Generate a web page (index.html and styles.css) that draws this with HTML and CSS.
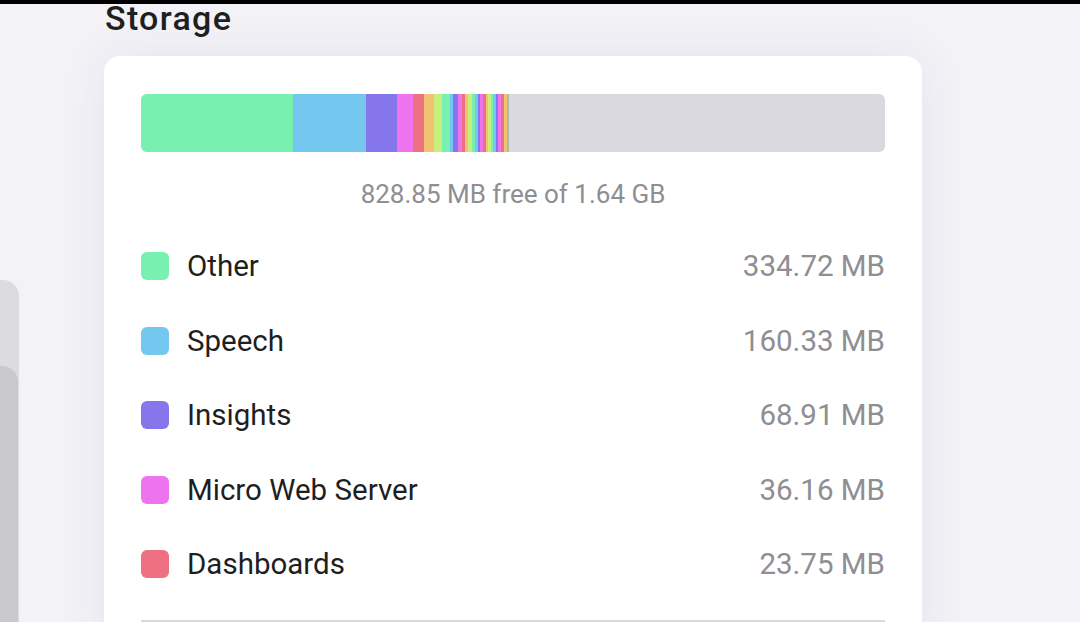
FILE: index.html
```html
<!DOCTYPE html>
<html lang="en">
<head>
  <meta charset="UTF-8" />
  <title>Storage</title>
  <link rel="stylesheet" href="styles.css">
</head>
<body>

<div class="statusbar"></div>
<div class="sheet sheet-back"></div>
<div class="sheet sheet-front"></div>

<main class="page">
  <h1>Storage</h1>

  <section class="card">
    <div id="usageBar" class="bar"></div>
    <p class="free">828.85 MB free of 1.64 GB</p>
    <ul id="usageList" class="list"></ul>
    <div class="divider"></div>
  </section>
</main>

<script>
  const totalMb = 1640;
  const palette = ['#77f0b0', '#74c7ee', '#8676ec', '#ee73ee', '#ee7181', '#efc372', '#c8ef7a'];

  const apps = [
    { name: 'Other', size: 334.72 },
    { name: 'Speech', size: 160.33 },
    { name: 'Insights', size: 68.91 },
    { name: 'Micro Web Server', size: 36.16 },
    { name: 'Dashboards', size: 23.75 }
  ];

  // the long tail of small apps, only shown in the bar
  const smallApps = [22, 17.6, 17.6, 6.6, 11, 8.8, 6.6, 6.6, 8.8, 6.6, 6.6, 4.4,
    6.6, 6.6, 4.4, 6.6, 4.4, 6.6, 4.4, 6.6, 6.6, 6.6];

  const bar = document.getElementById('usageBar');
  const list = document.getElementById('usageList');

  function addSegment(size, color) {
    const seg = document.createElement('div');
    seg.className = 'segment';
    seg.style.width = (size / totalMb * 100) + '%';
    seg.style.background = color;
    bar.appendChild(seg);
  }

  apps.forEach((app, i) => {
    addSegment(app.size, palette[i % palette.length]);

    const row = document.createElement('li');
    row.className = 'row';
    row.innerHTML =
      '<span class="swatch" style="background:' + palette[i % palette.length] + '"></span>' +
      '<span class="name">' + app.name + '</span>' +
      '<span class="size">' + app.size.toFixed(2) + ' MB</span>';
    list.appendChild(row);
  });

  smallApps.forEach((size, i) => {
    addSegment(size, palette[(apps.length + i) % palette.length]);
  });
  addSegment(4.4, '#a9b9aa');
</script>

</body>
</html>
```

FILE: styles.css
```css
body {
  margin: 0;
  background: #f2f2f7;
  font-family: Roboto, "Liberation Sans", sans-serif;
  color: #1c1c1e;
  height: 622px;
  overflow: hidden;
}
.statusbar {
  height: 4px;
  background: #000;
}
.sheet {
  position: absolute;
  left: 0;
  width: 19px;
  bottom: 0;
  border-top-right-radius: 16px;
}
.sheet-back {
  top: 280px;
  background: #dcdce0;
}
.sheet-front {
  top: 366px;
  width: 18px;
  background: #c9c9cd;
}
.page {
  padding-left: 104px;
}
h1 {
  margin: 0 0 24px 1px;
  font-size: 34px;
  line-height: 28px;
  font-weight: 500;
  letter-spacing: 1.3px;
  color: #1f1f1f;
}
.card {
  width: 744px;
  background: #fff;
  border-radius: 16px;
  padding: 38px 37px 40px;
  box-shadow: 0 0 50px rgba(60, 60, 90, 0.07);
}
.bar {
  display: flex;
  height: 58px;
  border-radius: 6px;
  overflow: hidden;
  background: #d9d9df;
}
.segment {
  height: 100%;
  flex-shrink: 0;
}
.free {
  margin: 27px 0 20px;
  text-align: center;
  font-size: 26px;
  line-height: 30px;
  color: #8e8e93;
}
.list {
  list-style: none;
  margin: 0;
  padding: 0;
}
.row {
  display: flex;
  align-items: center;
  height: 74.5px;
  font-size: 29.5px;
}
.swatch {
  width: 28px;
  height: 28px;
  border-radius: 6px;
  margin-right: 18px;
  flex-shrink: 0;
}
.name {
  flex: 1;
  color: #1f1f1f;
}
.size {
  color: #8e8e93;
}
.divider {
  height: 2px;
  margin-top: 18px;
  background: #d9d9de;
}
```
